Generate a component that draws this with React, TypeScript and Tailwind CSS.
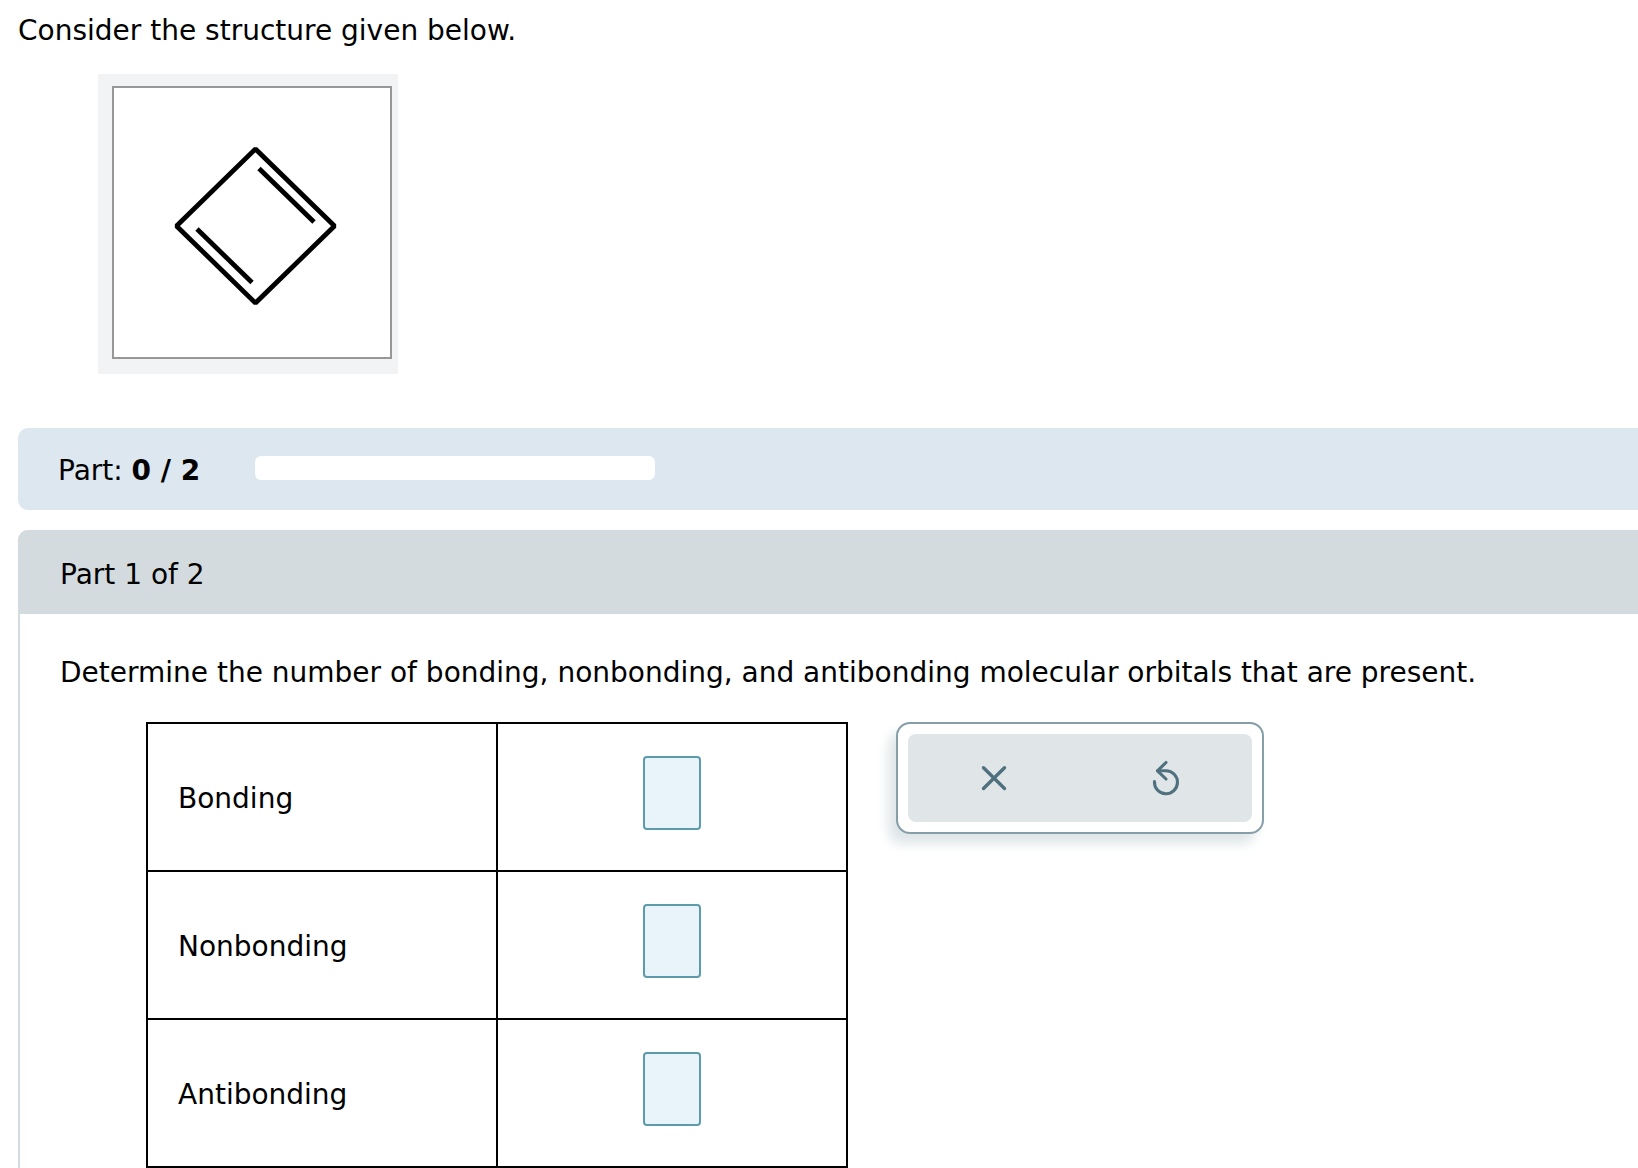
import React from 'react';

interface OrbitalRow {
  id: string;
  label: string;
}

const rows: OrbitalRow[] = [
  { id: 'bonding', label: 'Bonding' },
  { id: 'nonbonding', label: 'Nonbonding' },
  { id: 'antibonding', label: 'Antibonding' },
];

function Structure() {
  return (
    <div className="ml-20 h-[300px] w-[300px] bg-[#f1f3f5] pl-3.5 pt-3">
      <div className="h-[273px] w-[280px] border-2 border-[#979797] bg-white">
        <svg
          viewBox="0 0 276 269"
          className="h-full w-full"
          role="img"
          aria-label="Cyclobutadiene"
          fill="none"
          stroke="#000"
          strokeWidth="4.8"
        >
          {/* Ring */}
          <path d="M141.5 61 L220.5 138 L141.5 215 L62.5 138 Z" strokeLinejoin="bevel" />
          {/* Double bonds */}
          <path d="M145 80.5 L200 134" />
          <path d="M83 141 L138 194.5" />
        </svg>
      </div>
    </div>
  );
}

function Progress() {
  return (
    <div className="flex h-[82px] items-center rounded-l-[10px] bg-[#dde7f0] pl-10">
      <p className="w-[197px] pt-1">
        Part: <strong>0 / 2</strong>
      </p>
      <div
        role="progressbar"
        aria-label="Parts completed"
        aria-valuemin={0}
        aria-valuemax={2}
        aria-valuenow={0}
        className="mb-0.5 h-6 w-[400px] rounded-md bg-white"
      />
    </div>
  );
}

function OrbitalTable() {
  return (
    <table className="w-[702px] shrink-0 table-fixed border-collapse">
      <tbody>
        {rows.map((row) => (
          <tr key={row.id} className="h-[148px]">
            <th scope="row" className="border-2 border-black px-[30px] pt-1 text-left font-normal">
              <label htmlFor={row.id}>{row.label}</label>
            </th>
            <td className="border-2 border-black pb-2 text-center">
              <input
                id={row.id}
                type="text"
                className="mx-auto block h-[74px] w-[58px] rounded border-2 border-[#5b9bab] bg-[#e9f4fa] text-center"
              />
            </td>
          </tr>
        ))}
      </tbody>
    </table>
  );
}

function Toolbox() {
  return (
    <div className="w-[368px] rounded-[14px] border-2 border-[#859ea8] bg-white p-2.5 shadow-[-8px_10px_12px_0px_#dfe6e8]">
      <div className="flex h-[88px] overflow-hidden rounded-lg bg-[#e0e5e7] text-[#4f717f]">
        <button type="button" aria-label="Clear" className="flex flex-1 items-center justify-center">
          <svg viewBox="0 0 40 40" className="h-10 w-10" fill="none" stroke="currentColor" strokeWidth="3.4" strokeLinecap="round">
            <path d="M9.5 9.7 L30.5 30.5 M30.5 9.7 L9.5 30.5" />
          </svg>
        </button>
        <button type="button" aria-label="Undo" className="flex flex-1 items-center justify-center">
          <svg
            viewBox="0 0 40 40"
            className="h-10 w-10"
            fill="none"
            stroke="currentColor"
            strokeWidth="3.1"
            strokeLinecap="round"
            strokeLinejoin="round"
          >
            <path d="M8.5 23.6 A11.5 11.5 0 1 0 20 12.8 L11.5 12.8" />
            <path d="M20 4.5 L11.5 12.8 L20 21" />
          </svg>
        </button>
      </div>
    </div>
  );
}

export default function App() {
  return (
    <main className="overflow-x-hidden bg-white pl-[18px] font-['DejaVu_Sans',Verdana,sans-serif] text-[28px] leading-9 text-black">
      <p className="pb-[25px] pt-[13px]">Consider the structure given below.</p>
      <Structure />

      <div className="mt-[54px]">
        <Progress />
      </div>

      <section className="mt-5 rounded-tl-[10px] border-l-2 border-[#d3dbde]">
        <h2 className="-ml-0.5 flex h-[84px] items-center rounded-tl-[10px] bg-[#d3dbde] pl-[42px] pt-1.5">
          Part 1 of 2
        </h2>
        <p className="pl-10 pt-[41px]">
          Determine the number of bonding, nonbonding, and antibonding molecular orbitals that are present.
        </p>
        <div className="mt-[31px] flex items-start gap-12 pl-[126px]">
          <OrbitalTable />
          <Toolbox />
        </div>
      </section>
    </main>
  );
}
